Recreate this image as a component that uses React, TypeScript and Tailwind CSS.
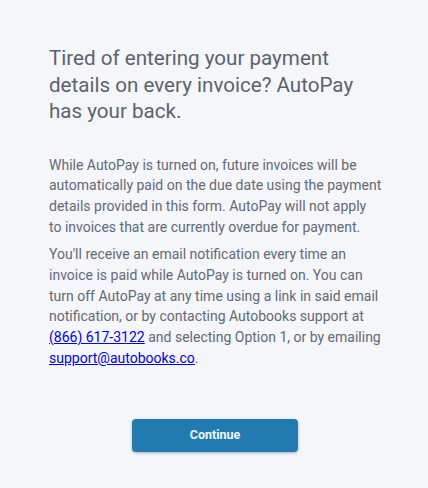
export default function App() {
  return (
    <div className="min-h-screen bg-[#f5f6fa] font-['Roboto',sans-serif]">
      <div className="ml-[49px] w-[333px] pt-[45px]">
        <h1 className="text-[20.6px] leading-[26.5px] text-[#5a6370]">
          Tired of entering your payment details on every invoice? AutoPay has your back.
        </h1>
        <div className="mt-[30px] text-[14px] leading-[20.7px] text-[#616a76]">
          <p>
            While AutoPay is turned on, future invoices will be automatically paid on the due date
            using the payment details provided in this form. AutoPay will not apply to invoices that
            are currently overdue for payment.
          </p>
          <p className="mt-[7px]">
            You'll receive an email notification every time an invoice is paid while AutoPay is
            turned on. You can turn off AutoPay at any time using a link in said email notification,
            or by contacting Autobooks support at{' '}
            <a href="#" className="text-[#0000ee] underline">
              (866) 617-3122
            </a>{' '}
            and selecting Option 1, or by emailing{' '}
            <a href="#" className="text-[#0000ee] underline">
              support@autobooks.co
            </a>
            .
          </p>
        </div>
        <div className="mt-[50px] flex w-[332px] justify-center">
          <button className="h-[33px] w-[166px] rounded-[4px] bg-[#217bb0] text-[12.5px] font-bold text-[#f2f6fa] shadow-[0_1px_3px_rgba(0,0,0,0.3)]">
            Continue
          </button>
        </div>
      </div>
    </div>
  )
}
